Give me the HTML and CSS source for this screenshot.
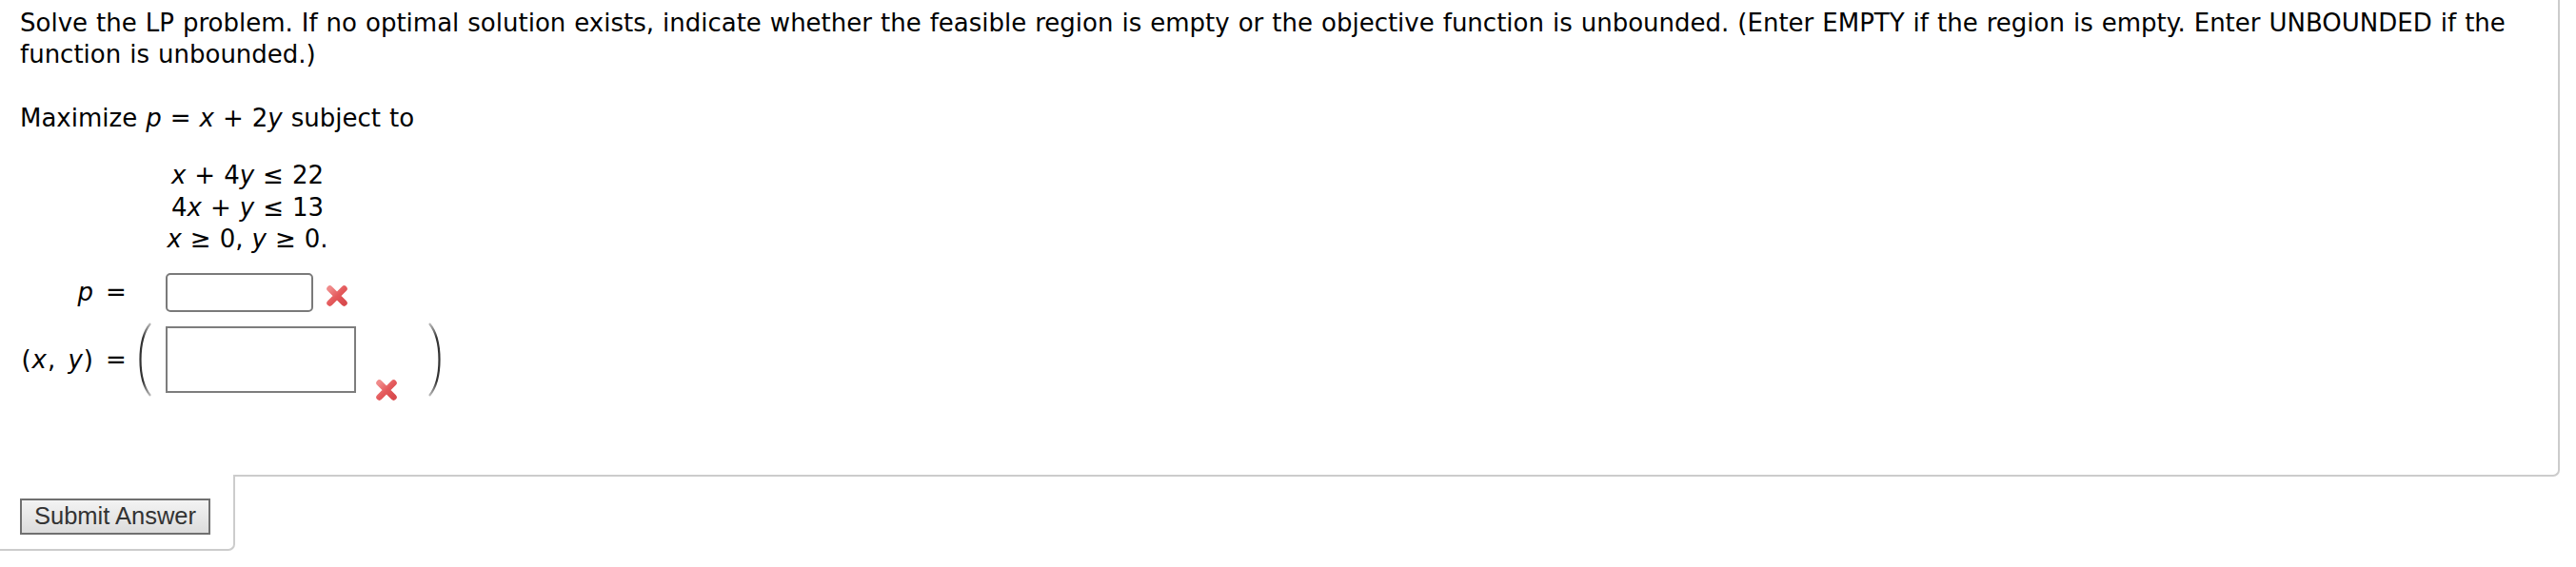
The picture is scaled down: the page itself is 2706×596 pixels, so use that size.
FILE: index.html
```html
<!DOCTYPE html>
<html lang="en">
<head>
<meta charset="utf-8">
<title>LP problem</title>
<link rel="stylesheet" href="styles.css">
</head>
<body>
<div class="question">
  <p class="intro">Solve the LP problem. If no optimal solution exists, indicate whether the feasible region is empty or the objective function is unbounded. (Enter EMPTY if the region is empty. Enter UNBOUNDED if the function is unbounded.)</p>
  <p class="objective">Maximize <i>p</i> = <i>x</i> + 2<i>y</i> subject to</p>
  <div class="constraints">
    <div><i>x</i> + 4<i>y</i> ≤ 22</div>
    <div>4<i>x</i> + <i>y</i> ≤ 13</div>
    <div><i>x</i> ≥ 0, <i>y</i> ≥ 0.</div>
  </div>
  <div class="answers">
    <div class="label"><i>p</i></div>
    <div class="eq">=</div>
    <div class="field field-p">
      <input class="box-p" type="text">
      <svg class="wrong" width="26" height="26" viewBox="0 0 26 26"><defs><linearGradient id="xg1" x1="0" y1="0" x2="1" y2="1"><stop offset="0" stop-color="#f08a8a"/><stop offset="0.5" stop-color="#e45a5c"/><stop offset="1" stop-color="#d84a4d"/></linearGradient></defs><path d="M5.5 5.5 L20.5 20.5 M20.5 5.5 L5.5 20.5" stroke="url(#xg1)" stroke-width="6.5" stroke-linecap="round" fill="none"/></svg>
    </div>
    <div class="label label-xy">(<i>x</i>, <i>y</i>)</div>
    <div class="eq">=</div>
    <div class="field field-xy">
      <svg class="paren" width="18" height="78" viewBox="0 0 18 78"><defs><linearGradient id="pg" x1="0" y1="0" x2="0" y2="1"><stop offset="0" stop-color="#bbb"/><stop offset="0.2" stop-color="#333"/><stop offset="0.8" stop-color="#333"/><stop offset="1" stop-color="#bbb"/></linearGradient></defs><path d="M16 1 C2 18 2 60 16 77" stroke="url(#pg)" stroke-width="2.2" fill="none"/></svg>
      <input class="box-xy" type="text">
      <svg class="wrong wrong-low" width="28" height="26" viewBox="0 0 28 26"><defs><linearGradient id="xg2" x1="0" y1="0" x2="1" y2="1"><stop offset="0" stop-color="#f08a8a"/><stop offset="0.5" stop-color="#e45a5c"/><stop offset="1" stop-color="#d84a4d"/></linearGradient></defs><path d="M6.5 5.5 L21.5 20.5 M21.5 5.5 L6.5 20.5" stroke="url(#xg2)" stroke-width="6.5" stroke-linecap="round" fill="none"/></svg>
      <svg class="paren paren-r" width="18" height="78" viewBox="0 0 18 78"><defs><linearGradient id="pg2" x1="0" y1="0" x2="0" y2="1"><stop offset="0" stop-color="#bbb"/><stop offset="0.2" stop-color="#333"/><stop offset="0.8" stop-color="#333"/><stop offset="1" stop-color="#bbb"/></linearGradient></defs><path d="M2 1 C16 18 16 60 2 77" stroke="url(#pg2)" stroke-width="2.2" fill="none"/></svg>
    </div>
  </div>
</div>
<div class="submit-area">
  <button class="submit" type="button">Submit Answer</button>
</div>
</body>
</html>
```
FILE: styles.css
```css
html, body {
  margin: 0;
  padding: 0;
  background: #fff;
}
body {
  font-family: "DejaVu Sans", Verdana, sans-serif;
  font-size: 26px;
  word-spacing: 0.75px;
  color: #000;
}
.question {
  margin-right: 17px;
  padding: 8px 18px 82px 21px;
  border-right: 2px solid #cccccc;
  border-bottom: 2px solid #cccccc;
  border-bottom-right-radius: 7px;
}
.intro {
  margin: 0;
  line-height: 33px;
}
.objective {
  margin: 34px 0 0 0;
  line-height: 33px;
}
.constraints {
  margin: 27px 0 0 139px;
  width: 200px;
  text-align: center;
  line-height: 33.5px;
}
.answers {
  margin-top: 18px;
  display: grid;
  grid-template-columns: 77px 44px auto;
  row-gap: 11px;
  align-items: center;
}
.label {
  text-align: right;
  white-space: nowrap;
}
.label-xy {
  letter-spacing: 1px;
  word-spacing: 3px;
  margin-right: -1px;
}
.eq {
  padding-left: 13px;
}
.field {
  display: flex;
  align-items: center;
}
.field-p {
  padding-left: 32px;
}
.box-p {
  width: 155px;
  height: 41px;
  box-sizing: border-box;
  border: 2px solid #7a7a7a;
  border-radius: 5px;
  margin: 0;
  padding: 0;
  background: #fff;
}
.wrong {
  display: block;
}
.field-p .wrong {
  margin-left: 12px;
  margin-top: 8px;
}
.paren {
  display: block;
}
.box-xy {
  margin: 0 0 0 14px;
  padding: 0;
  width: 200px;
  height: 70px;
  box-sizing: border-box;
  border: 2px solid #7d7d7d;
  border-radius: 0;
  background: #fff;
}
.wrong-low {
  align-self: flex-end;
  margin-left: 18px;
  margin-bottom: -6px;
}
.paren-r {
  margin-left: 29px;
}
.submit-area {
  margin-top: -2px;
  width: 247px;
  padding: 25px 0 15px 21px;
  box-sizing: border-box;
  background: #fff;
  border-right: 2px solid #cccccc;
  border-bottom: 2px solid #cccccc;
  border-bottom-right-radius: 7px;
}
.submit {
  display: block;
  width: 200px;
  height: 38px;
  margin: 0;
  padding: 0;
  box-sizing: border-box;
  border: 2px solid #707070;
  border-radius: 0;
  background: linear-gradient(#f3f3f3, #dcdcdc);
  font-family: "Liberation Sans", Arial, sans-serif;
  font-size: 25.5px;
  word-spacing: 0;
  color: #333;
}
```
